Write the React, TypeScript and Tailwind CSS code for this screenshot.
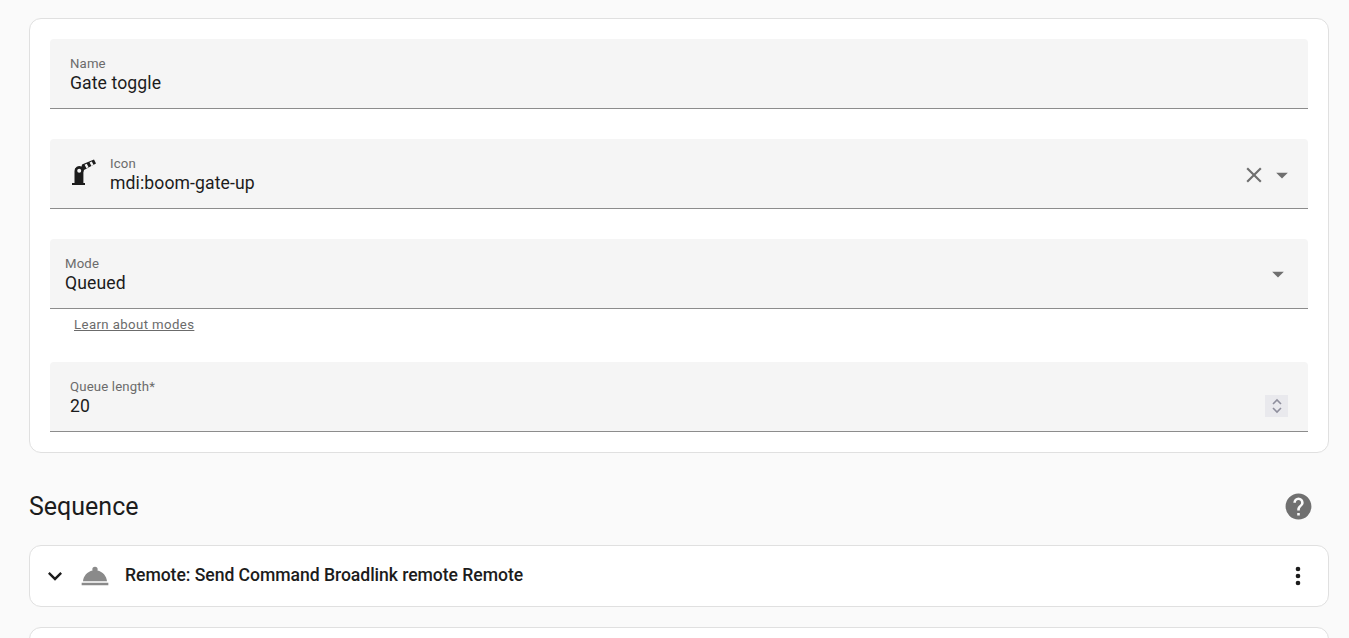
const font = { fontFamily: "Roboto, sans-serif" };

function Icon({ d, className }: { d: string; className: string }) {
  return (
    <svg viewBox="0 0 24 24" className={className} fill="currentColor">
      <path d={d} />
    </svg>
  );
}

const MENU_DOWN = "M7,10L12,15L17,10H7Z";
const CLOSE = "M19,6.41L17.59,5L12,10.59L6.41,5L5,6.41L10.59,12L5,17.59L6.41,19L12,13.41L17.59,19L19,17.59L13.41,12L19,6.41Z";
const HELP = "M15.07,11.25L14.17,12.17C13.45,12.89 13,13.5 13,15H11V14.5C11,13.39 11.45,12.39 12.17,11.67L13.41,10.41C13.78,10.05 14,9.55 14,9C14,7.89 13.1,7 12,7A2,2 0 0,0 10,9H8A4,4 0 0,1 12,5A4,4 0 0,1 16,9C16,9.88 15.64,10.67 15.07,11.25M13,19H11V17H13M12,2A10,10 0 0,0 2,12A10,10 0 0,0 12,22A10,10 0 0,0 22,12C22,6.47 17.5,2 12,2Z";
const BELL = "M2,17H22V19H2V17M13.84,7.79C13.94,7.55 14,7.28 14,7A2,2 0 0,0 12,5A2,2 0 0,0 10,7C10,7.28 10.06,7.55 10.16,7.79C6.25,8.6 3.27,11.93 3,16H21C20.73,11.93 17.75,8.6 13.84,7.79Z";
const CHEVRON = "M7.41,8.58L12,13.17L16.59,8.58L18,10L12,16L6,10L7.41,8.58Z";
const DOTS = "M12,16A2,2 0 0,1 14,18A2,2 0 0,1 12,20A2,2 0 0,1 10,18A2,2 0 0,1 12,16M12,10A2,2 0 0,1 14,12A2,2 0 0,1 12,14A2,2 0 0,1 10,12A2,2 0 0,1 12,10M12,4A2,2 0 0,1 14,6A2,2 0 0,1 12,8A2,2 0 0,1 10,6A2,2 0 0,1 12,4Z";

function BoomGate() {
  return (
    <svg viewBox="0 -1 24 26" className="h-[26px] w-6 shrink-0 text-[#1c1c1c]" fill="currentColor">
      <path
        fillRule="evenodd"
        d="M0,25V23H2.5V11A4.8,4.8 0 0,1 9.6,6.6L10,4.5L22,-0.6L24,3.5L12,10L11.4,12.5V23H13V25H0ZM7.2,8.8A2,2 0 1,0 7.2,12.8A2,2 0 1,0 7.2,8.8Z"
      />
      <path fill="#f5f5f5" d="M12.6,4.7L14.8,3.7L16.6,7.2L14.4,8.3ZM17.6,2.5L19.8,1.5L21.6,5L19.4,6.1Z" />
    </svg>
  );
}

function FieldText({ label, value, star }: { label: string; value: string; star?: boolean }) {
  return (
    <div className="flex flex-col">
      <span className="mt-px text-[13.2px] leading-[14px] tracking-[0.15px] text-[#6b6b6b]">
        {label}
        {star ? "*" : ""}
      </span>
      <span className="mt-px text-[17.6px] leading-[22px] tracking-[0.1px] text-[#1c1c1c]">{value}</span>
    </div>
  );
}

const fieldCls = "flex h-[70px] items-start rounded-t-[4px] border-b border-[#8c8c8c] bg-[#f5f5f5]";

export default function App() {
  return (
    <div className="h-[638px] overflow-hidden bg-[#fafafa] pl-[29px] pr-5 pt-[18px]" style={font}>
      <section className="flex h-[435px] flex-col rounded-xl border border-[#e0e0e0] bg-white px-5 pt-5">
        <div className={`${fieldCls} pl-5 pt-[17px]`}>
          <FieldText label="Name" value="Gate toggle" />
        </div>

        <div className={`${fieldCls} mt-[30px] pl-[22px] pt-[17px]`}>
          <div className="mr-[14px] mt-[3px]">
            <BoomGate />
          </div>
          <div className="flex-1">
            <FieldText label="Icon" value="mdi:boom-gate-up" />
          </div>
          <Icon d={CLOSE} className="mt-[6px] h-[26px] w-[26px] text-[#6f6f6f]" />
          <Icon d={MENU_DOWN} className="mt-[5px] mr-[12px] ml-[1px] h-7 w-7 text-[#6f6f6f]" />
        </div>

        <div className={`${fieldCls} mt-[30px] pl-[15px] pt-[17px]`}>
          <div className="flex-1">
            <FieldText label="Mode" value="Queued" />
          </div>
          <Icon d={MENU_DOWN} className="mt-[4px] mr-4 h-7 w-7 text-[#6f6f6f]" />
        </div>

        <a className="mt-2 ml-6 block h-[22px] text-[13.2px] leading-[16px] tracking-[0.4px] text-[#6b6b6b] underline">
          Learn about modes
        </a>

        <div className={`${fieldCls} mt-[23px] pl-5 pt-[17px]`}>
          <div className="flex-1">
            <FieldText label="Queue length" value="20" star />
          </div>
          <div className="mt-4 mr-5 flex h-[22px] w-[23px] flex-col items-center justify-center bg-[#e9e9ed] text-[#8f8f9d]">
            <svg viewBox="0 0 12 18" className="h-[18px] w-3" fill="none" stroke="currentColor" strokeWidth="1.6">
              <path d="M2,7L6,3L10,7M2,11L6,15L10,11" />
            </svg>
          </div>
        </div>
      </section>

      <div className="mt-[30px] flex h-[46px] items-center justify-between pr-[15px]">
        <h2 className="mt-0.5 text-[25px] font-normal leading-8 text-[#1c1c1c]">Sequence</h2>
        <Icon d={HELP} className="h-[31px] w-[31px] text-[#707070]" />
      </div>

      <div className="mt-4 flex h-[62px] items-center rounded-xl border border-[#e0e0e0] bg-white pl-[11px] pr-[16px]">
        <Icon d={CHEVRON} className="h-7 w-7 text-[#1c1c1c]" />
        <Icon d={BELL} className="ml-[10px] h-8 w-8 text-[#8a8a8a]" />
        <span className="mb-0.5 ml-[14px] flex-1 text-[17.6px] font-medium tracking-[-0.05px] text-[#1c1c1c]">
          Remote: Send Command Broadlink remote Remote
        </span>
        <Icon d={DOTS} className="h-7 w-7 text-[#1c1c1c]" />
      </div>

      <div className="mt-5 h-[62px] rounded-xl border border-[#e0e0e0] bg-white" />
    </div>
  );
}
